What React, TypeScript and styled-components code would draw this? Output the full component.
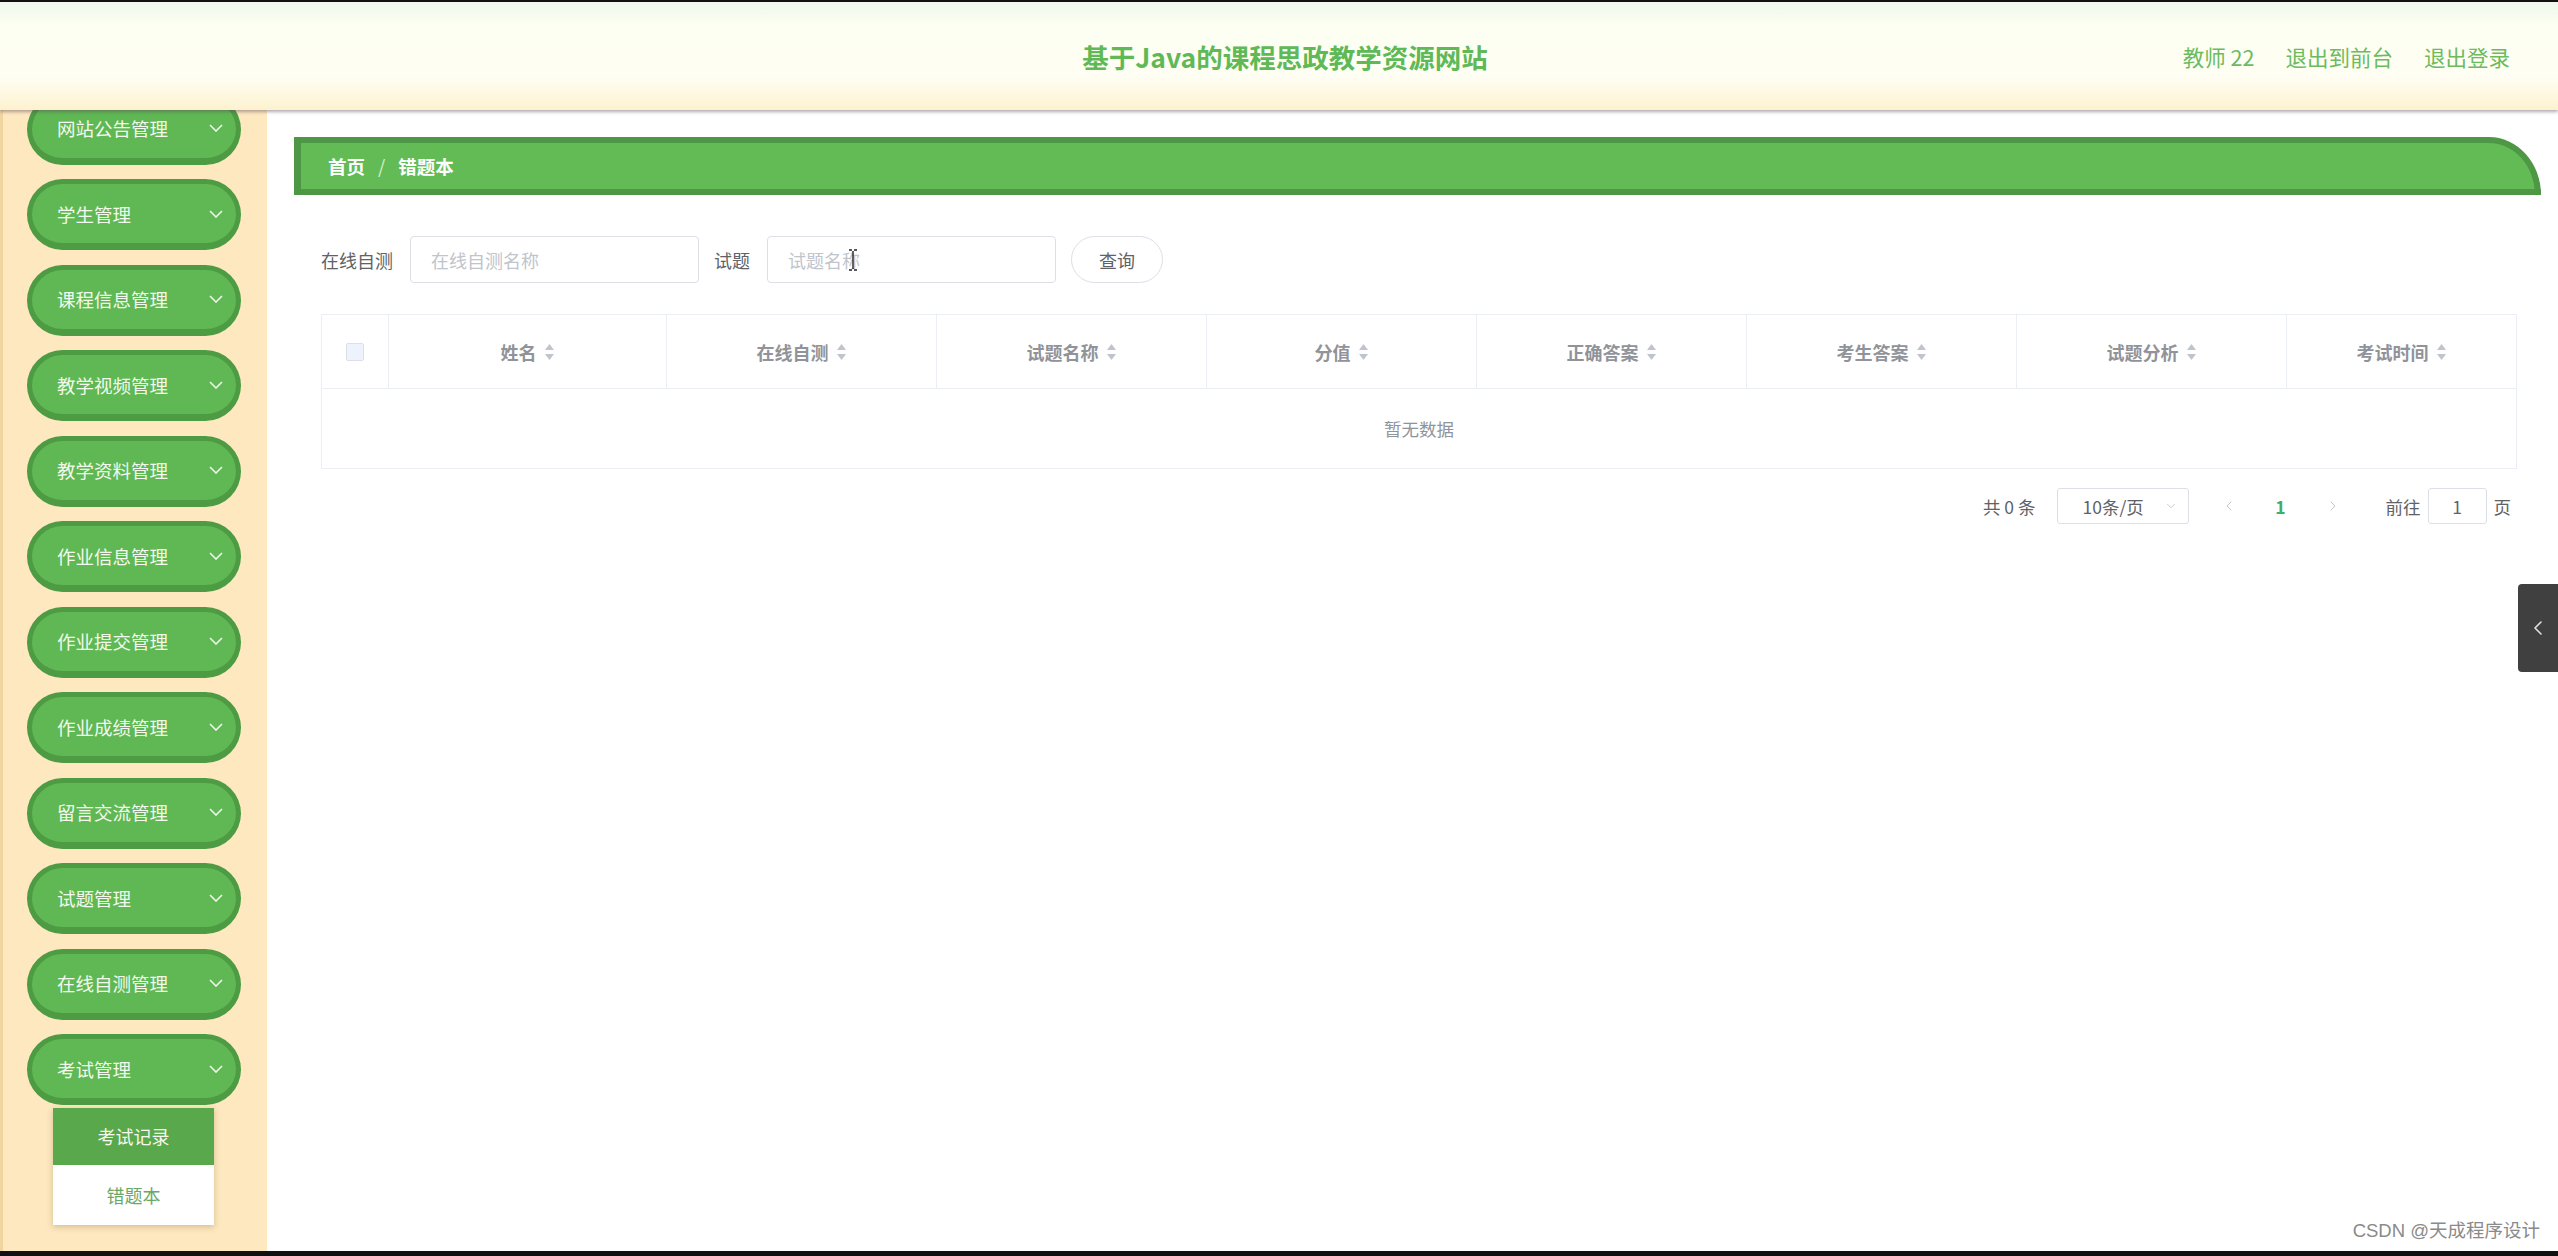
import React from "react";
import styled, { createGlobalStyle } from "styled-components";
import { ChevronLeft, ChevronRight, ChevronDown } from "lucide-react";

const Global = createGlobalStyle`
  html, body { margin: 0; padding: 0; }
  body { font-family: "Noto Sans CJK SC", "Noto Sans", sans-serif; }
  * { box-sizing: border-box; }
`;

const Page = styled.div`
  position: relative;
  width: 100vw;
  height: 100vh;
  display: flex;
  flex-direction: column;
  overflow: hidden;
  background: #fff;
  border-top: 2px solid #111;
  border-bottom: 5px solid #111;
`;

const Header = styled.header`
  position: relative;
  z-index: 2;
  flex-shrink: 0;
  height: 108px;
  display: grid;
  grid-template-columns: 1fr auto 1fr;
  align-items: center;
  background: linear-gradient(180deg, #eef8ec 0%, #fdfff2 22%, #fffef3 70%, #fdf2cf 100%);
  box-shadow: 0 2px 3px rgba(90, 70, 90, 0.45);
`;

const Title = styled.h1`
  grid-column: 2;
  margin: 0 0 0 12px;
  font-size: 26.5px;
  font-weight: 700;
  color: #5fb957;
  letter-spacing: 0;
`;

const HeaderLinks = styled.nav`
  grid-column: 3;
  justify-self: end;
  display: flex;
  gap: 31px;
  padding-right: 48px;
  font-size: 21.5px;
  color: #6cbb5f;
`;

const Body = styled.div`
  flex: 1;
  display: flex;
  min-height: 0;
`;

const Sidebar = styled.aside`
  width: 267px;
  flex-shrink: 0;
  background: #fde8bf;
  border-left: 3px solid #f0d5a0;
  padding-left: 24px;
  overflow: hidden;
`;

const MenuList = styled.div`
  display: flex;
  flex-direction: column;
  gap: 14.5px;
  margin-top: -16.5px;
`;

const MenuGroup = styled.div`
  display: flex;
  flex-direction: column;
  gap: 2.5px;
`;

const Pill = styled.div`
  width: 214px;
  height: 71px;
  border-radius: 36px;
  border: 5px solid #4d9b43;
  border-bottom-width: 7px;
  background: #5fb853;
  display: flex;
  align-items: center;
  justify-content: space-between;
  padding: 0 13px 0 25px;
  color: #f3f9ed;
  font-size: 18.5px;
`;

const SubMenu = styled.div`
  margin-left: 26px;
  width: 161px;
  background: #fff;
  box-shadow: 0 2px 6px rgba(120, 90, 40, 0.3);
  display: flex;
  flex-direction: column;
`;

const SubItem = styled.div<{ $active?: boolean }>`
  height: ${(p) => (p.$active ? 57 : 60)}px;
  display: flex;
  align-items: center;
  justify-content: center;
  font-size: 18px;
  background: ${(p) => (p.$active ? "#59a84b" : "#fff")};
  color: ${(p) => (p.$active ? "#f4f8ee" : "#6aa866")};
`;

const Main = styled.main`
  flex: 1;
  min-width: 0;
  padding: 27px 17px 0 27px;
  display: flex;
  flex-direction: column;
`;

const Breadcrumb = styled.div`
  height: 58px;
  border: 6px solid #4e9745;
  border-left-width: 7px;
  border-top-right-radius: 52px 58px;
  background: #62bb55;
  display: flex;
  align-items: center;
  padding-left: 27px;
  font-size: 18.5px;
  font-weight: 700;
  color: #fff;
`;

const Sep = styled.span`
  margin: 0 13px;
  font-weight: 400;
  color: #d6efcc;
`;

const Content = styled.section`
  padding: 0 24px 0 27px;
  margin-top: 41px;
  display: flex;
  flex-direction: column;
`;

const SearchRow = styled.div`
  display: flex;
  align-items: center;
  height: 47px;
`;

const Label = styled.span`
  font-size: 18px;
  color: #606266;
  margin-right: 17px;
`;

const InputWrap = styled.div`
  position: relative;
  width: 289px;
  height: 47px;
  margin-right: 15px;
`;

const Input = styled.input`
  width: 100%;
  height: 100%;
  border: 1px solid #dcdfe6;
  border-radius: 4px;
  padding: 0 0 0 20px;
  font-family: inherit;
  font-size: 18px;
  color: #606266;
  outline: none;
  &::placeholder {
    color: #c0c4cc;
  }
`;

const Cursor = styled.svg`
  position: absolute;
  left: 81px;
  top: 13px;
`;

const QueryButton = styled.button`
  width: 92px;
  height: 47px;
  border-radius: 24px;
  border: 1px solid #dcdfe6;
  background: #fff;
  font-family: inherit;
  font-size: 18px;
  color: #606266;
`;

const Table = styled.div`
  margin-top: 31px;
  border: 1px solid #ebeef5;
  display: grid;
  grid-template-columns: 67px 278px repeat(6, 270px) 1fr;
`;

const HeadCell = styled.div<{ $last?: boolean }>`
  height: 74px;
  display: flex;
  align-items: center;
  justify-content: center;
  gap: 7px;
  border-right: ${(p) => (p.$last ? "none" : "1px solid #ebeef5")};
  border-bottom: 1px solid #ebeef5;
  font-size: 18px;
  font-weight: 700;
  color: #909399;
`;

const CheckBox = styled.span`
  width: 18px;
  height: 18px;
  border: 1px solid #dcdfe6;
  border-radius: 2px;
  background: #edf2fc;
`;

const EmptyRow = styled.div`
  grid-column: 1 / -1;
  height: 79px;
  display: flex;
  align-items: center;
  justify-content: center;
  font-size: 17.5px;
  color: #909399;
`;

const Pagination = styled.div`
  margin-top: 19px;
  display: flex;
  justify-content: flex-end;
  align-items: center;
  height: 36px;
  padding-right: 6px;
  font-size: 17.5px;
  color: #606266;
`;

const Total = styled.span`
  margin-right: 21px;
`;

const SizeSelect = styled.div`
  width: 132px;
  height: 36px;
  border: 1px solid #dcdfe6;
  border-radius: 3px;
  display: flex;
  align-items: center;
  justify-content: space-between;
  padding: 0 10px 0 25px;
  color: #606266;
`;

const PageBtn = styled.span<{ $active?: boolean }>`
  width: 32px;
  height: 36px;
  display: flex;
  align-items: center;
  justify-content: center;
  font-weight: 700;
  color: ${(p) => (p.$active ? "#3fae6a" : "#c0c4cc")};
`;

const Pager = styled.div`
  display: flex;
  gap: 20px;
  margin-left: 24px;
`;

const Jumper = styled.div`
  display: flex;
  align-items: center;
  margin-left: 37px;
`;

const JumpInput = styled.div`
  width: 59px;
  height: 36px;
  margin: 0 7px;
  border: 1px solid #dcdfe6;
  border-radius: 3px;
  display: flex;
  align-items: center;
  justify-content: center;
`;

const SideTab = styled.div`
  position: absolute;
  right: 0;
  top: 582px;
  width: 40px;
  height: 88px;
  background: #404040;
  border-radius: 4px 0 0 4px;
  display: flex;
  align-items: center;
  justify-content: center;
`;

const Watermark = styled.div`
  position: absolute;
  right: 18px;
  bottom: 9px;
  font-family: "Liberation Sans", "Noto Sans CJK SC", sans-serif;
  font-size: 18.5px;
  color: #8a8a8a;
`;

const Caret = () => (
  <svg width="11" height="18" viewBox="0 0 11 18">
    <path d="M5.5 1 L10 7 L1 7 Z" fill="#c0c4cc" />
    <path d="M5.5 17 L10 11 L1 11 Z" fill="#c0c4cc" />
  </svg>
);

const Chevron = () => (
  <svg width="14" height="8" viewBox="0 0 14 8">
    <polyline points="1,1 7,7 13,1" fill="none" stroke="#eef7e8" strokeWidth="1.6" />
  </svg>
);

const menus = [
  "网站公告管理",
  "学生管理",
  "课程信息管理",
  "教学视频管理",
  "教学资料管理",
  "作业信息管理",
  "作业提交管理",
  "作业成绩管理",
  "留言交流管理",
  "试题管理",
  "在线自测管理",
];

const columns = ["姓名", "在线自测", "试题名称", "分值", "正确答案", "考生答案", "试题分析", "考试时间"];

export default function App() {
  return (
    <>
      <Global />
      <Page>
        <Header>
          <Title>基于Java的课程思政教学资源网站</Title>
          <HeaderLinks>
            <span>教师 22</span>
            <span>退出到前台</span>
            <span>退出登录</span>
          </HeaderLinks>
        </Header>
        <Body>
          <Sidebar>
            <MenuList>
              {menus.map((m) => (
                <Pill key={m}>
                  <span>{m}</span>
                  <Chevron />
                </Pill>
              ))}
              <MenuGroup>
                <Pill>
                  <span>考试管理</span>
                  <Chevron />
                </Pill>
                <SubMenu>
                  <SubItem $active>考试记录</SubItem>
                  <SubItem>错题本</SubItem>
                </SubMenu>
              </MenuGroup>
            </MenuList>
          </Sidebar>
          <Main>
            <Breadcrumb>
              <span>首页</span>
              <Sep>/</Sep>
              <span>错题本</span>
            </Breadcrumb>
            <Content>
              <SearchRow>
                <Label>在线自测</Label>
                <InputWrap>
                  <Input placeholder="在线自测名称" />
                </InputWrap>
                <Label>试题</Label>
                <InputWrap>
                  <Input placeholder="试题名称" />
                  <Cursor width="10" height="22" viewBox="0 0 10 22">
                    <path d="M1 1 H4 M6 1 H9 M5 2 V20 M1 21 H4 M6 21 H9" stroke="#222" strokeWidth="1.4" fill="none" />
                  </Cursor>
                </InputWrap>
                <QueryButton>查询</QueryButton>
              </SearchRow>
              <Table>
                <HeadCell>
                  <CheckBox />
                </HeadCell>
                {columns.map((c, i) => (
                  <HeadCell key={c} $last={i === columns.length - 1}>
                    <span>{c}</span>
                    <Caret />
                  </HeadCell>
                ))}
                <EmptyRow>暂无数据</EmptyRow>
              </Table>
              <Pagination>
                <Total>共 0 条</Total>
                <SizeSelect>
                  <span>10条/页</span>
                  <ChevronDown size={14} color="#c0c4cc" strokeWidth={1.5} />
                </SizeSelect>
                <Pager>
                  <PageBtn>
                    <ChevronLeft size={16} color="#c0c4cc" strokeWidth={1.5} />
                  </PageBtn>
                  <PageBtn $active>1</PageBtn>
                  <PageBtn>
                    <ChevronRight size={16} color="#c0c4cc" strokeWidth={1.5} />
                  </PageBtn>
                </Pager>
                <Jumper>
                  <span>前往</span>
                  <JumpInput>1</JumpInput>
                  <span>页</span>
                </Jumper>
              </Pagination>
            </Content>
          </Main>
        </Body>
        <SideTab>
          <ChevronLeft size={24} color="#e0e0e0" strokeWidth={1.6} />
        </SideTab>
        <Watermark>CSDN @天成程序设计</Watermark>
      </Page>
    </>
  );
}
